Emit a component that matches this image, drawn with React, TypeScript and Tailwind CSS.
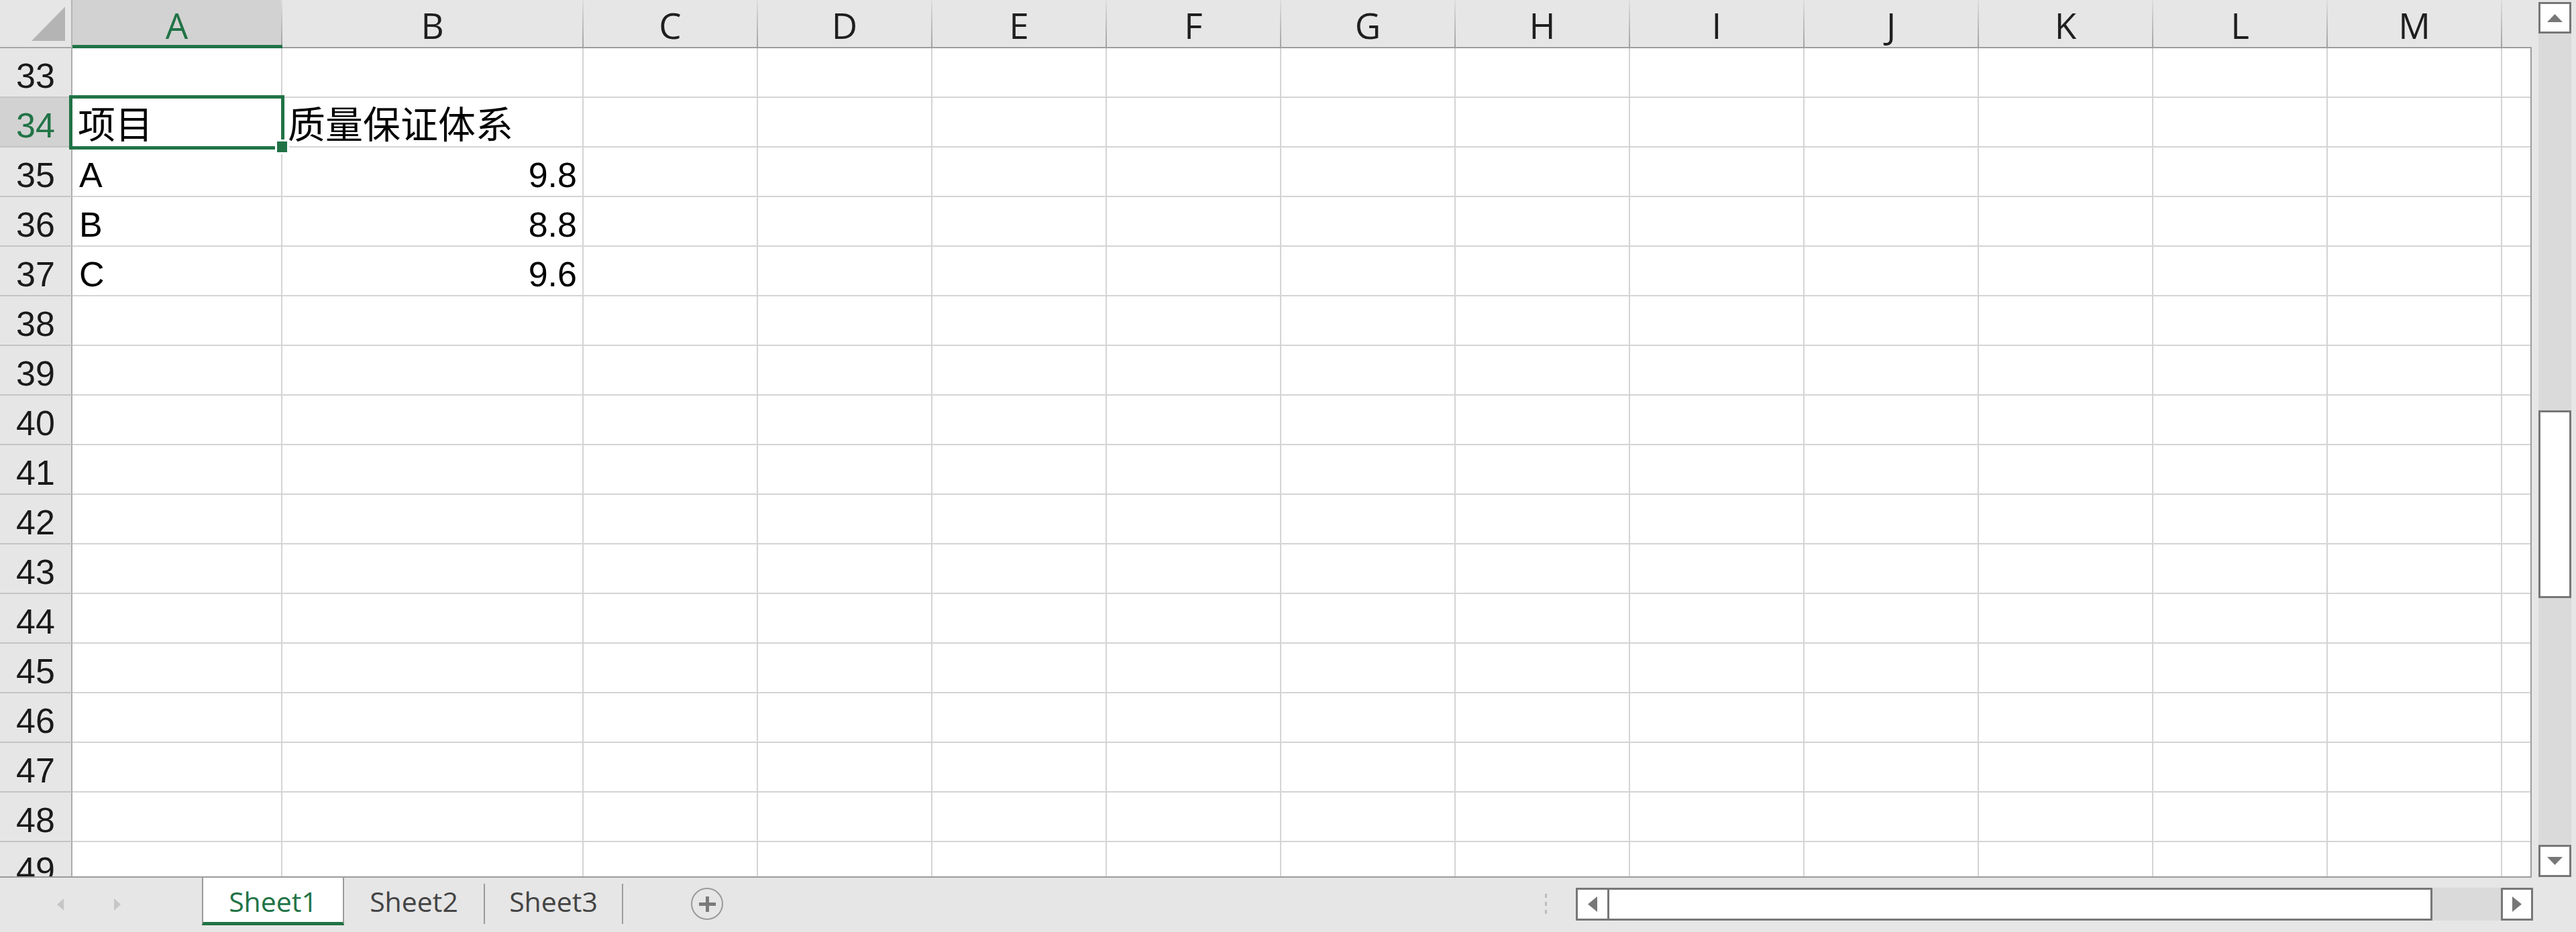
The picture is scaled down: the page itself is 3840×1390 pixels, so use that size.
import React from "react";

const latin = "font-['Liberation_Sans','Noto_Sans_CJK_SC',sans-serif] text-[52px] leading-none";
const cjk = "font-['Noto_Sans_CJK_SC',sans-serif] text-[56px] leading-none";
const ui = "font-['Open_Sans','Liberation_Sans',sans-serif] leading-none";

const cols = [
  { label: "A", w: "w-[313px]" },
  { label: "B", w: "w-[449px]" },
  ...["C", "D", "E", "F", "G", "H", "I", "J", "K", "L", "M"].map((label) => ({ label, w: "w-[260px]" })),
];

// sheet contents: row -> [A, B]
const data: Record<number, [string, string]> = {
  34: ["项目", "质量保证体系"],
  35: ["A", "9.8"],
  36: ["B", "8.8"],
  37: ["C", "9.6"],
};

const rows = Array.from({ length: 17 }, (_, i) => 33 + i);

const HeaderRow: React.FC = () => (
  <div className="flex h-[72px] w-[3774px] shrink-0">
    {/* corner */}
    <div className="w-[108px] h-full border-r-2 border-b-2 border-r-[#b4b4b4] border-b-[#a6a6a6] bg-[#e6e6e6] flex items-start">
      <svg className="ml-[47px] mt-[10px] w-[50px] h-[51px]" viewBox="0 0 50 51">
        <polygon points="50,0 50,51 0,51" fill="#b4b4b4" />
      </svg>
    </div>
    {cols.map((c) => {
      const active = c.label === "A";
      return (
        <div
          key={c.label}
          className={`${c.w} h-full flex ${
            active ? "bg-[#d2d2d2] border-b-[5px] border-[#217346] text-[#217346]" : "bg-[#e6e6e6] border-b-2 border-[#9e9e9e] text-[#1f1f1f]"
          }`}
        >
          <div className={`flex-1 flex justify-center items-end ${active ? "pb-[3px]" : "pb-[6px]"} ${ui} text-[53px]`}>
            {c.label}
          </div>
          <div className="w-[2px] self-stretch bg-linear-to-b from-[#dedede] to-[#a2a2a2]" />
        </div>
      );
    })}
    <div className="w-[44px] h-full bg-[#e6e6e6] border-b-2 border-[#9e9e9e]" />
  </div>
);

const Body: React.FC = () => (
  <div className="relative w-[3774px] h-[1237px] border-r-2 border-b-2 border-[#9b9b9b] bg-white overflow-hidden flex flex-col">
    {rows.map((r) => {
      const sel = r === 34;
      const cells = data[r];
      const isCjk = r === 34;
      return (
        <div key={r} className="flex h-[74px] shrink-0">
          <div
            className={`w-[108px] h-full border-r-2 border-b-2 border-r-[#acacac] border-b-[#c4c4c4] flex justify-center items-end pb-[5px] ${latin} ${
              sel ? "bg-[#d2d2d2] text-[#217346]" : "bg-[#e6e6e6] text-[#1a1a1a]"
            }`}
          >
            {r}
          </div>
          {cols.map((c, ci) => {
            const text = cells && ci < 2 ? cells[ci] : "";
            const right = ci === 1 && !isCjk;
            return (
              <div
                key={c.label}
                className={`${c.w} h-full border-r-2 border-b-2 border-[#d4d4d4] flex items-end text-black ${
                  isCjk ? `${cjk} pb-[8px] pl-[8px]` : `${latin} pb-[5px]`
                } ${right ? "justify-end pr-[8px]" : isCjk ? "" : "pl-[10px]"}`}
              >
                {text}
              </div>
            );
          })}
          <div className="w-[42px] h-full border-b-2 border-[#d4d4d4]" />
        </div>
      );
    })}
    {/* active cell A34 */}
    <div className="absolute left-[103px] top-[70px] w-[321px] h-[81px] border-[5px] border-[#217346]" />
    <div className="absolute left-[410px] top-[136px] w-[21px] h-[22px] border-[3px] border-white bg-[#217346]" />
  </div>
);

const ScrollBox: React.FC<{ className?: string; children?: React.ReactNode }> = ({ className = "", children }) => (
  <div className={`bg-white border-[3px] border-[#777777] flex items-center justify-center ${className}`}>{children}</div>
);

const VScroll: React.FC = () => (
  <div className="w-[49px] h-full flex flex-col pt-[3px]">
    <ScrollBox className="h-[47px] shrink-0">
      <svg width="23" height="12" viewBox="0 0 23 12">
        <polygon points="11.5,0 23,12 0,12" fill="#777777" />
      </svg>
    </ScrollBox>
    <div className="h-[1210px] bg-[#dadada] flex flex-col">
      <div className="h-[562px]" />
      <div className="h-[280px] bg-white border-[3px] border-[#777777]" />
    </div>
    <ScrollBox className="h-[48px] shrink-0">
      <svg width="23" height="12" viewBox="0 0 23 12">
        <polygon points="0,0 23,0 11.5,12" fill="#777777" />
      </svg>
    </ScrollBox>
  </div>
);

const TabBar: React.FC = () => (
  <div className={`flex h-[81px] items-start ${ui} text-[41px]`}>
    <div className="w-[301px] h-full flex items-start">
      <svg className="ml-[85px] mt-[31px]" width="10" height="18" viewBox="0 0 10 18">
        <polygon points="10,0 10,18 0,9" fill="#c6c6c6" />
      </svg>
      <svg className="ml-[75px] mt-[31px]" width="10" height="18" viewBox="0 0 10 18">
        <polygon points="0,0 10,9 0,18" fill="#c6c6c6" />
      </svg>
    </div>
    <div className="-mt-[2px] w-[212px] h-[73px] bg-white border-x-2 border-x-[#9b9b9b] border-b-[5px] border-b-[#217346] flex justify-center pt-[17px] text-[#217346]">
      Sheet1
    </div>
    {[
      { name: "Sheet2", w: "w-[208px]" },
      { name: "Sheet3", w: "w-[204px]" },
    ].map((t) => (
      <div key={t.name} className="flex h-full">
        <div className={`${t.w} flex justify-center pt-[15px] text-[#444444]`}>{t.name}</div>
        <div className="w-[2px] h-[60px] mt-[9px] bg-[#9b9b9b]" />
      </div>
    ))}
    <div className="ml-[101px] mt-[15px] w-[48px] h-[48px] rounded-full border-2 border-[#9a9a9a] flex items-center justify-center">
      <svg width="25" height="23" viewBox="0 0 25 23">
        <rect x="0" y="9" width="25" height="5" fill="#7a7a7a" />
        <rect x="10" y="0" width="5" height="23" fill="#7a7a7a" />
      </svg>
    </div>
    <div className="ml-auto mt-[24px] flex flex-col gap-[6px]">
      <div className="w-[3px] h-[6px] bg-[#bcbcbc]" />
      <div className="w-[3px] h-[6px] bg-[#bcbcbc]" />
      <div className="w-[3px] h-[6px] bg-[#bcbcbc]" />
    </div>
    <div className="ml-[43px] mr-[64px] mt-[15px] h-[49px] flex">
      <ScrollBox className="w-[50px] h-full">
        <svg width="14" height="23" viewBox="0 0 14 23">
          <polygon points="14,0 14,23 0,11.5" fill="#777777" />
        </svg>
      </ScrollBox>
      <div className="w-[1227px] h-full bg-white border-[3px] border-l-0 border-[#777777]" />
      <div className="w-[102px] h-full bg-[#dadada]" />
      <ScrollBox className="w-[48px] h-full">
        <svg width="14" height="23" viewBox="0 0 14 23">
          <polygon points="0,0 14,11.5 0,23" fill="#777777" />
        </svg>
      </ScrollBox>
    </div>
  </div>
);

export default function App() {
  return (
    <div className="w-[3840px] h-[1390px] bg-[#e6e6e6] flex flex-col overflow-hidden">
      <div className="flex h-[1309px] shrink-0">
        <div className="w-[3784px] flex flex-col">
          <HeaderRow />
          <Body />
        </div>
        <VScroll />
      </div>
      <TabBar />
    </div>
  );
}
